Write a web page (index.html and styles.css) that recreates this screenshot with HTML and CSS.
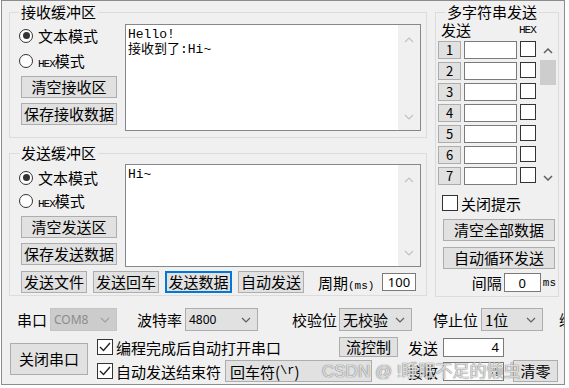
FILE: index.html
```html
<!DOCTYPE html>
<html lang="zh-CN">

<head>
    <meta charset="UTF-8">
    <meta name="viewport" content="width=device-width, initial-scale=1.0">
    <title>串口助手</title>
    <link rel="stylesheet" href="styles.css">
</head>

<body>
    <div class="window">
        <div class="top">
            <div class="left-col">
                <!-- receive buffer -->
                <div class="group recv-group">
                    <span class="group-title">接收缓冲区</span>
                    <div class="side">
                        <label class="radio-row"><span class="radio checked"></span><span>文本模式</span></label>
                        <label class="radio-row gap"><span class="radio"></span><span><span class="hex">HEX</span>模式</span></label>
                        <button class="btn side-btn first">清空接收区</button>
                        <button class="btn side-btn">保存接收数据</button>
                    </div>
                    <div class="text-box recv-box">
                        <div class="text-content">Hello!<br>接收到了:Hi~</div>
                        <div class="scroll">
                            <svg width="10" height="6" viewBox="0 0 10 6"><polyline points="1,5 5,1 9,5" /></svg>
                            <svg width="10" height="6" viewBox="0 0 10 6"><polyline points="1,1 5,5 9,1" /></svg>
                        </div>
                    </div>
                </div>

                <!-- send buffer -->
                <div class="group send-group">
                    <span class="group-title">发送缓冲区</span>
                    <div class="send-body">
                        <div class="side send-side">
                            <label class="radio-row"><span class="radio checked"></span><span>文本模式</span></label>
                            <label class="radio-row"><span class="radio"></span><span><span class="hex">HEX</span>模式</span></label>
                            <button class="btn side-btn first">清空发送区</button>
                            <button class="btn side-btn">保存发送数据</button>
                        </div>
                        <div class="text-box send-box">
                            <div class="text-content">Hi~</div>
                            <div class="scroll">
                                <svg width="10" height="6" viewBox="0 0 10 6"><polyline points="1,5 5,1 9,5" /></svg>
                                <svg width="10" height="6" viewBox="0 0 10 6"><polyline points="1,1 5,5 9,1" /></svg>
                            </div>
                        </div>
                    </div>
                    <div class="send-row">
                        <button class="btn w66">发送文件</button>
                        <button class="btn w66">发送回车</button>
                        <button class="btn w67 focused">发送数据</button>
                        <button class="btn w66">自动发送</button>
                        <span class="period">周期<span class="small">(ms)</span></span>
                        <span class="input period-input">100</span>
                    </div>
                </div>
            </div>

            <!-- multi string send -->
            <div class="group multi-group">
                <span class="group-title">多字符串发送</span>
                <div class="multi-head">
                    <span class="head-send">发送</span>
                    <span class="hex head-hex">HEX</span>
                </div>
                <div class="multi-list">
                    <div class="multi-rows">
                        <div class="multi-row"><button class="btn num-btn">1</button><span class="input multi-input"></span><span class="check"></span></div>
                        <div class="multi-row"><button class="btn num-btn">2</button><span class="input multi-input"></span><span class="check"></span></div>
                        <div class="multi-row"><button class="btn num-btn">3</button><span class="input multi-input"></span><span class="check"></span></div>
                        <div class="multi-row"><button class="btn num-btn">4</button><span class="input multi-input"></span><span class="check"></span></div>
                        <div class="multi-row"><button class="btn num-btn">5</button><span class="input multi-input"></span><span class="check"></span></div>
                        <div class="multi-row"><button class="btn num-btn">6</button><span class="input multi-input"></span><span class="check"></span></div>
                        <div class="multi-row"><button class="btn num-btn">7</button><span class="input multi-input"></span><span class="check"></span></div>
                    </div>
                    <div class="multi-scroll">
                        <svg width="10" height="6" viewBox="0 0 10 6"><polyline points="1,5 5,1 9,5" /></svg>
                        <span class="thumb"></span>
                        <svg class="down" width="10" height="6" viewBox="0 0 10 6"><polyline points="1,1 5,5 9,1" /></svg>
                    </div>
                </div>
                <label class="check-row close-tip"><span class="check"></span>关闭提示</label>
                <button class="btn multi-btn first">清空全部数据</button>
                <button class="btn multi-btn">自动循环发送</button>
                <div class="gap-row">
                    <span>间隔</span>
                    <span class="input gap-input">0</span>
                    <span class="small">ms</span>
                </div>
            </div>
        </div>

        <!-- port settings -->
        <div class="bottom">
            <div class="port-row">
                <span class="lbl port-lbl">串口</span>
                <span class="combo disabled com-combo"><span class="num">COM8</span><svg width="10" height="6" viewBox="0 0 10 6"><polyline points="1,1 5,5 9,1" /></svg></span>
                <span class="lbl baud-lbl">波特率</span>
                <span class="combo baud-combo"><span class="num">4800</span><svg width="10" height="6" viewBox="0 0 10 6"><polyline points="1,1 5,5 9,1" /></svg></span>
                <span class="lbl parity-lbl">校验位</span>
                <span class="combo parity-combo">无校验<svg width="10" height="6" viewBox="0 0 10 6"><polyline points="1,1 5,5 9,1" /></svg></span>
                <span class="lbl stop-lbl">停止位</span>
                <span class="combo stop-combo">1位<svg width="10" height="6" viewBox="0 0 10 6"><polyline points="1,1 5,5 9,1" /></svg></span>
                <span class="lbl code-lbl">编码</span>
            </div>
            <div class="bottom-main">
                <button class="btn close-btn">关闭串口</button>
                <div class="bottom-rows">
                    <div class="opt-row row2">
                        <label class="check-row auto-open"><span class="check checked"><svg width="12" height="10" viewBox="0 0 12 10"><polyline points="1,5 4.5,8.5 11,1" /></svg></span>编程完成后自动打开串口</label>
                        <button class="btn flow-btn">流控制</button>
                        <span class="lbl count-lbl">发送</span>
                        <span class="input count-input">4</span>
                    </div>
                    <div class="opt-row row3">
                        <label class="check-row auto-end"><span class="check checked"><svg width="12" height="10" viewBox="0 0 12 10"><polyline points="1,5 4.5,8.5 11,1" /></svg></span>自动发送结束符</label>
                        <span class="combo end-combo">回车符(<span class="mono">\r</span>)</span>
                        <span class="lbl recv-lbl">接收</span>
                        <span class="input count-input">4</span>
                        <button class="btn clear-btn">清零</button>
                    </div>
                </div>
            </div>
        </div>

        <span class="watermark">CSDN @ !睡眠不足的懒虫</span>
    </div>
</body>

</html>
```

FILE: styles.css
```css
body {
    margin: 0;
    background-color: #ffffff;
    font-family: "Noto Sans CJK SC", sans-serif;
    font-size: 15px;
    color: #000;
}

.window {
    position: relative;
    margin-left: 1px;
    width: 564px;
    height: 385px;
    box-sizing: border-box;
    border: 1px solid #8c8c8c;
    background-color: #f0f0f0;
    overflow: hidden;
}

.top {
    display: flex;
    gap: 8px;
    padding: 3px 0 0 7px;
}

.left-col {
    display: flex;
    flex-direction: column;
    width: 418px;
}

/* group boxes */
.group {
    position: relative;
    box-sizing: border-box;
    border: 1px solid #dcdcdc;
}

.group-title {
    position: absolute;
    top: -10px;
    left: 9px;
    padding: 0 2px;
    line-height: 18px;
    background-color: #f0f0f0;
}

.recv-group {
    display: flex;
    gap: 8px;
    margin-top: 8px;
    height: 126px;
    padding: 11px 5px 0 8px;
}

.send-group {
    margin-top: 15px;
    height: 143px;
    padding: 10px 5px 0 8px;
}

.send-body {
    display: flex;
    gap: 8px;
}

.side {
    display: flex;
    flex-direction: column;
    width: 99px;
}

.send-side {
    padding-top: 2px;
}

.radio-row {
    display: flex;
    align-items: center;
    gap: 5px;
    height: 23px;
    white-space: nowrap;
}

.radio-row.gap {
    margin-top: 2px;
}

.radio {
    position: relative;
    margin-left: 1px;
    width: 14px;
    height: 14px;
    box-sizing: border-box;
    border: 1px solid #333;
    border-radius: 50%;
    background-color: #fff;
}

.radio.checked::after {
    content: "";
    position: absolute;
    left: 2.5px;
    top: 2.5px;
    width: 7px;
    height: 7px;
    border-radius: 50%;
    background-color: #333;
}

.hex {
    font-family: "Liberation Mono", monospace;
    font-size: 11px;
    letter-spacing: -1px;
}

/* buttons */
.btn {
    box-sizing: border-box;
    height: 22px;
    padding: 0;
    border: 1px solid #adadad;
    background-color: #e1e1e1;
    font-family: inherit;
    font-size: 15px;
    line-height: 18px;
    color: #000;
    white-space: nowrap;
}

.btn.focused {
    border-color: #0078d7;
    box-shadow: inset 0 0 0 1px #0078d7;
}

.side-btn {
    margin-left: 3px;
    width: 96px;
    margin-top: 5px;
}

.side-btn.first {
    margin-top: 4px;
}

/* text areas */
.text-box {
    display: flex;
    width: 296px;
    box-sizing: border-box;
    border: 1px solid #828790;
    background-color: #fff;
}

.recv-box {
    height: 107px;
}

.send-box {
    height: 103px;
}

.text-content {
    flex: 1;
    padding: 2px 2px;
    font-family: "Liberation Mono", "Noto Sans CJK SC", monospace;
    font-size: 13px;
    line-height: 15px;
}

.scroll {
    display: flex;
    flex-direction: column;
    justify-content: space-between;
    align-items: center;
    width: 22px;
    padding: 12px 0 10px;
    background-color: #f0f0f0;
}

.scroll svg polyline,
.combo svg polyline {
    fill: none;
    stroke: #c2c2c2;
    stroke-width: 1.2;
}

.send-row {
    display: flex;
    align-items: center;
    gap: 6px;
    height: 22px;
    margin: 4px 0 0 3px;
}

.w66 {
    width: 66px;
}

.w67 {
    width: 67px;
}

.period {
    margin-left: 8px;
    width: 59px;
    white-space: nowrap;
}

.small {
    font-family: "Liberation Mono", monospace;
    font-size: 11px;
}

.input {
    display: flex;
    align-items: center;
    box-sizing: border-box;
    height: 18px;
    border: 1px solid #7a7a7a;
    background-color: #fff;
    font-family: "Noto Sans", sans-serif;
    font-size: 13px;
}

.period-input {
    width: 34px;
    margin-left: -1px;
    justify-content: center;
}

/* multi string send */
.multi-group {
    margin-top: 8px;
    width: 124px;
    height: 285px;
    padding: 0 0 0 2px;
}

.multi-head {
    display: flex;
    height: 18px;
    margin-top: 8px;
    line-height: 18px;
}

.head-send {
    margin-left: 3px;
}

.head-hex {
    margin-left: 48px;
}

.multi-list {
    display: flex;
    margin-top: 2px;
}

.multi-rows {
    display: flex;
    flex-direction: column;
    gap: 3px;
}

.multi-row {
    display: flex;
    gap: 3px;
    height: 18px;
}

.num-btn {
    width: 23px;
    height: 18px;
    font-size: 13px;
    line-height: 14px;
}

.multi-input {
    width: 53px;
}

.check {
    display: flex;
    align-items: center;
    justify-content: center;
    flex-shrink: 0;
    width: 16px;
    height: 16px;
    box-sizing: border-box;
    border: 1px solid #333;
    background-color: #fff;
}

.check svg polyline {
    fill: none;
    stroke: #222;
    stroke-width: 1.4;
}

.multi-scroll {
    display: flex;
    flex-direction: column;
    align-items: center;
    width: 18px;
    height: 144px;
    margin-left: 3px;
    padding-top: 7px;
    box-sizing: border-box;
    background-color: #f0f0f0;
}

.multi-scroll polyline {
    fill: none;
    stroke: #606060;
    stroke-width: 1.5;
}

.thumb {
    width: 16px;
    height: 25px;
    margin-top: 6px;
    background-color: #cdcdcd;
}

.multi-scroll .down {
    margin-top: auto;
    margin-bottom: 4px;
}

.check-row {
    display: flex;
    align-items: center;
    gap: 3px;
    white-space: nowrap;
}

.close-tip {
    height: 16px;
    margin: 10px 0 0 4px;
}

.multi-btn {
    width: 112px;
    margin: 6px 0 0 5px;
}

.multi-btn.first {
    margin-top: 8px;
}

.gap-row {
    display: flex;
    align-items: center;
    justify-content: flex-end;
    gap: 2px;
    height: 19px;
    margin-top: 4px;
    padding-right: 2px;
}

.gap-input {
    width: 37px;
    height: 19px;
    justify-content: center;
}

/* bottom settings */
.bottom {
    padding: 11px 0 0 8px;
}

.port-row {
    display: flex;
    align-items: center;
    height: 23px;
    white-space: nowrap;
}

.lbl {
    flex-shrink: 0;
}

.port-lbl {
    margin-left: 7px;
    width: 30px;
}

.baud-lbl {
    margin-left: 20px;
    width: 45px;
}

.parity-lbl {
    margin-left: 34px;
    width: 45px;
}

.stop-lbl {
    margin-left: 21px;
    width: 45px;
}

.code-lbl {
    margin-left: 16px;
}

.combo {
    display: flex;
    align-items: center;
    justify-content: space-between;
    flex-shrink: 0;
    height: 23px;
    box-sizing: border-box;
    padding: 0 6px 0 3px;
    border: 1px solid #adadad;
    background-color: #e1e1e1;
    white-space: nowrap;
}

.combo svg polyline {
    stroke: #606060;
}

.combo .num {
    font-family: "Noto Sans", sans-serif;
    font-size: 12px;
}

.combo.disabled {
    border-color: #c4c4c4;
    background-color: #cccccc;
    color: #8d8d8d;
}

.combo.disabled svg polyline {
    stroke: #a0a0a0;
}

.com-combo {
    margin-left: 3px;
    width: 67px;
}

.baud-combo {
    margin-left: 3px;
    width: 73px;
}

.parity-combo {
    margin-left: 2px;
    width: 73px;
}

.stop-combo {
    margin-left: 3px;
    width: 62px;
}

.bottom-main {
    display: flex;
    margin-top: 6px;
}

.close-btn {
    width: 78px;
    height: 32px;
    margin-top: 6px;
}

.bottom-rows {
    display: flex;
    flex-direction: column;
    gap: 3px;
    margin-left: 9px;
}

.opt-row {
    display: flex;
    align-items: center;
    white-space: nowrap;
}

.row2 {
    height: 20px;
}

.row3 {
    height: 22px;
}

.auto-open {
    width: 242px;
}

.auto-end {
    width: 128px;
}

.flow-btn {
    width: 59px;
    height: 20px;
}

.count-lbl {
    margin-left: 10px;
    width: 32px;
}

.recv-lbl {
    margin-left: 36px;
    width: 32px;
}

.count-input {
    width: 61px;
    height: 19px;
    margin-left: 3px;
    justify-content: flex-end;
    padding-right: 4px;
}

.end-combo {
    width: 147px;
    height: 22px;
    justify-content: flex-start;
    padding-left: 4px;
}

.mono {
    font-family: "Liberation Mono", monospace;
    font-size: 12px;
}

.clear-btn {
    width: 45px;
    margin-left: 9px;
}

.watermark {
    position: absolute;
    left: 320px;
    top: 356px;
    font-family: "Liberation Sans", "Noto Sans CJK SC", sans-serif;
    font-size: 17px;
    color: rgba(255, 255, 255, 0.75);
    text-shadow: 0 0 1px #777, 0 0 1px #777;
    white-space: nowrap;
    pointer-events: none;
}
```
